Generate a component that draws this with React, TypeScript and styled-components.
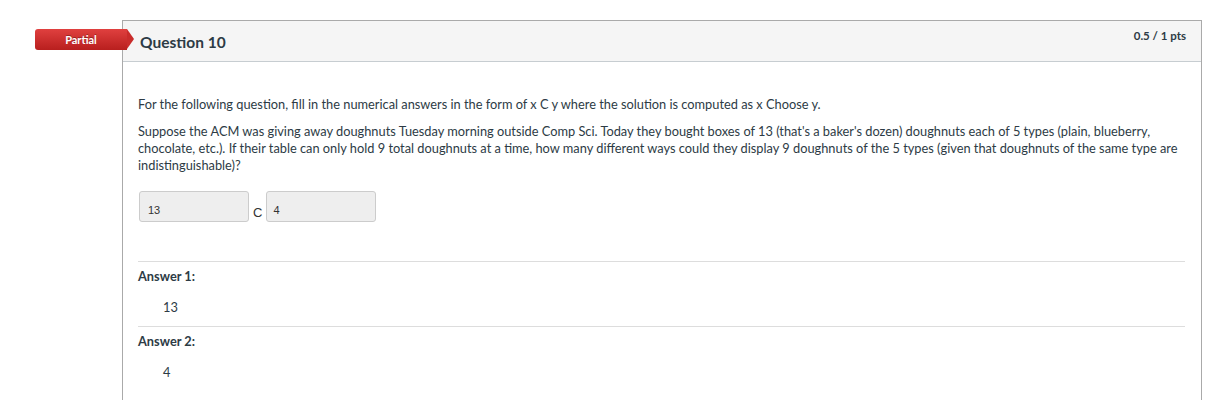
import React from 'react'
import styled, { createGlobalStyle } from 'styled-components'

const GlobalStyle = createGlobalStyle`
  body {
    margin: 0;
    background: #fff;
    font-family: Lato, 'Open Sans', sans-serif;
    color: #2d3b45;
  }
`

const Page = styled.div`
  padding: 20px 24px 0 122px;
  height: 380px;
  overflow: hidden;
`

const QuestionCard = styled.div`
  position: relative;
  width: 1080px;
  box-sizing: border-box;
  border: 1px solid #aaaaaa;
  border-bottom: none;
  height: 400px;
`

const Badge = styled.div`
  position: absolute;
  left: -88px;
  top: 8px;
  width: 92px;
  height: 21px;
  background: linear-gradient(#e0403f, #b81f1e);
  border-radius: 3px 0 0 3px;
  color: #fff;
  font-size: 11px;
  font-weight: 700;
  display: flex;
  align-items: center;
  justify-content: center;
  text-shadow: 0 -1px 0 rgba(0, 0, 0, 0.3);
  &::after {
    content: '';
    position: absolute;
    right: -7px;
    top: 0;
    border-top: 10.5px solid transparent;
    border-bottom: 10.5px solid transparent;
    border-left: 7px solid #c92c2b;
  }
`

const Header = styled.div`
  display: flex;
  justify-content: space-between;
  background: #f5f5f5;
  border-bottom: 1px solid #c7cdd1;
  height: 40px;
  padding: 0 15px 0 17px;
`

const Title = styled.h2`
  margin: 0;
  font-size: 15.5px;
  font-weight: 700;
  padding-top: 12px;
  color: #2d3b45;
`

const Points = styled.div`
  font-size: 11.5px;
  font-weight: 700;
  padding-top: 8px;
  color: #2d3b45;
`

const Body = styled.div`
  padding: 34px 16px 0 15px;
  font-size: 12.8px;
  line-height: 17px;
`

const Para = styled.p`
  margin: 0 0 10px;
`

const BlanksRow = styled.div`
  display: flex;
  align-items: flex-end;
  gap: 4px;
  margin: 17px 0 0 1px;
`

const Blank = styled.div`
  width: 110px;
  height: 31px;
  box-sizing: border-box;
  background: #eeeeee;
  border: 1px solid #cccccc;
  border-radius: 3px;
  font-family: 'Liberation Sans', Arial, sans-serif;
  font-size: 11px;
  padding: 10px 0 0 ${(p: { $pad: number }) => p.$pad}px;
  color: #333;
`

const Choose = styled.span`
  font-family: 'Liberation Sans', Arial, sans-serif;
  font-size: 13px;
  color: #333;
  line-height: 1;
  padding-bottom: 3px;
`

const AnswerBlock = styled.div`
  border-top: 1px solid #dddddd;
  height: 65px;
  padding-top: 6px;
  box-sizing: border-box;
`

const AnswerLabel = styled.div`
  font-size: 12.8px;
  font-weight: 700;
`

const AnswerValue = styled.div`
  font-size: 12.8px;
  margin: 14px 0 0 25px;
`

const Answers = styled.div`
  margin-top: 39px;
`

export default function App() {
  return (
    <>
      <GlobalStyle />
      <Page>
        <QuestionCard>
          <Badge>Partial</Badge>
          <Header>
            <Title>Question 10</Title>
            <Points>0.5 / 1 pts</Points>
          </Header>
          <Body>
            <Para>
              For the following question, fill in the numerical answers in the form of x C y where the
              solution is computed as x Choose y.
            </Para>
            <Para>
              Suppose the ACM was giving away doughnuts Tuesday morning outside Comp Sci. Today they bought
              boxes of 13 (that's a baker's dozen) doughnuts each of 5 types (plain, blueberry, chocolate,
              etc.). If their table can only hold 9 total doughnuts at a time, how many different ways could
              they display 9 doughnuts of the 5 types (given that doughnuts of the same type are
              indistinguishable)?
            </Para>
            <BlanksRow>
              <Blank $pad={8}>13</Blank>
              <Choose>C</Choose>
              <Blank $pad={6}>4</Blank>
            </BlanksRow>
            <Answers>
              <AnswerBlock>
                <AnswerLabel>Answer 1:</AnswerLabel>
                <AnswerValue>13</AnswerValue>
              </AnswerBlock>
              <AnswerBlock>
                <AnswerLabel>Answer 2:</AnswerLabel>
                <AnswerValue>4</AnswerValue>
              </AnswerBlock>
            </Answers>
          </Body>
        </QuestionCard>
      </Page>
    </>
  )
}
